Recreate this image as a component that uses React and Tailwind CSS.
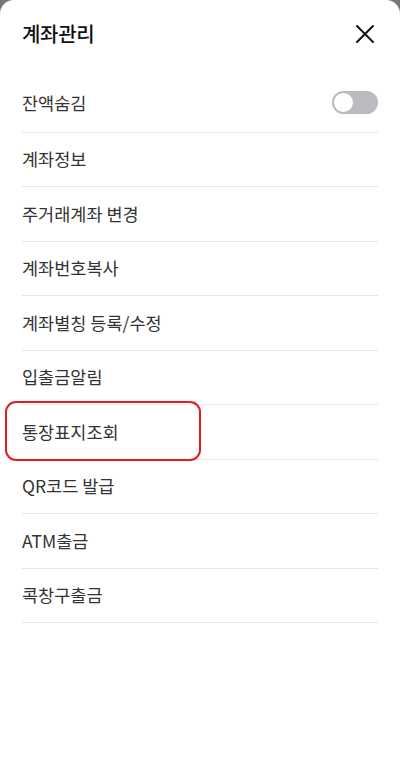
import React from 'react';

const menus = [
  '계좌정보',
  '주거래계좌 변경',
  '계좌번호복사',
  '계좌별칭 등록/수정',
  '입출금알림',
  '통장표지조회',
  'QR코드 발급',
  'ATM출금',
  '콕창구출금',
];

const Toggle = () => (
  <div className="w-[46px] h-[23px] rounded-full bg-[#b9bbbe] flex items-center px-[2px]">
    <div className="w-[19px] h-[19px] rounded-full bg-white" />
  </div>
);

const App = () => {
  return (
    <div className="w-[400px] h-[783px] bg-[#777777]" style={{ fontFamily: '"Noto Sans CJK KR", "Noto Sans", sans-serif' }}>
      <div className="w-full h-full bg-white rounded-t-[14px] px-[22px]">
        <div className="h-[68px] flex items-center justify-between">
          <h1 className="text-[20px] font-medium text-[#111] tracking-[-0.3px]">계좌관리</h1>
          <button className="mr-[3px]">
            <svg width="20" height="20" viewBox="0 0 20 20" fill="none">
              <path d="M2 2L18 18M18 2L2 18" stroke="#111" strokeWidth="2" strokeLinecap="round" />
            </svg>
          </button>
        </div>
        <ul className="mt-[10px]">
          <li className="h-[54.5px] border-b border-[#e6e6e6] flex items-center justify-between pb-[4px]">
            <span className="text-[17.5px] text-[#333]">잔액숨김</span>
            <Toggle />
          </li>
          {menus.map((m) => (
            <li key={m} className="relative h-[54.5px] border-b border-[#e6e6e6] flex items-center">
              <span className="text-[17.5px] text-[#333]">{m}</span>
              {m === '통장표지조회' && (
                <div className="absolute left-[-17px] top-[-4px] w-[196px] h-[60px] border-[2.5px] border-[#e31c1c] rounded-[11px]" />
              )}
            </li>
          ))}
        </ul>
      </div>
    </div>
  );
};

export default App;
